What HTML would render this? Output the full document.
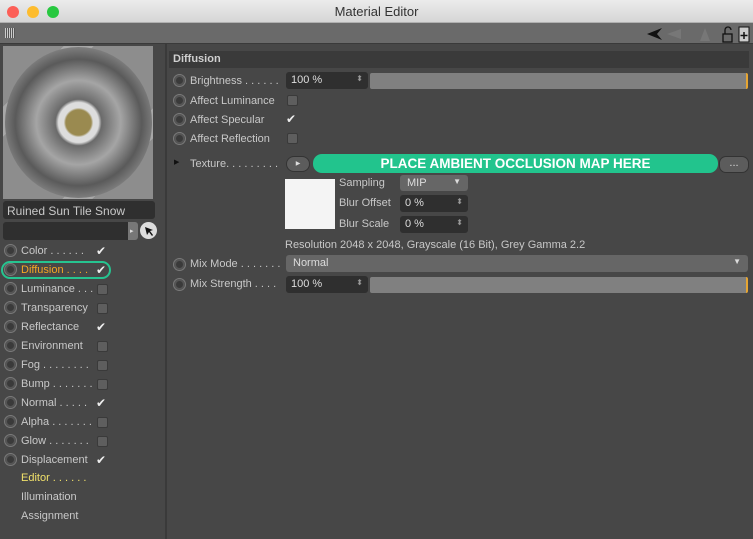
<!DOCTYPE html>
<html><head><style>
*{margin:0;padding:0;box-sizing:border-box}
body{width:753px;height:539px;background:#474747;font-family:"Liberation Sans",sans-serif;font-size:11px;color:#c8c8c8;position:relative;overflow:hidden}
.a{position:absolute}
.rad{position:absolute;width:13px;height:13px;border-radius:50%;background:#3a3a3a;border:1px solid #7a7a7a;box-shadow:inset 0 0 0 2px #555}
.cb{position:absolute;width:11px;height:11px;border-radius:2px;background:#5e5e5e;border:1px solid #3a3a3a}
.ck{position:absolute;font-size:12px;color:#eee;line-height:12px}
.fld{position:absolute;height:17px;background:#2f2f2f;border-radius:3px;color:#ddd;padding:2px 5px;font-size:11px}
.bar{position:absolute;height:16px;background:#808080;border-radius:2px;border-right:2px solid #e6a532}
.lbl{position:absolute;font-size:11px;color:#c8c8c8;white-space:nowrap}
</style></head><body>
<div class="a" style="left:0;top:0;width:753px;height:23px;background:linear-gradient(#ececec,#d6d6d6);border-bottom:1px solid #b0b0b0"></div>
<div class="a" style="left:7px;top:6px;width:12px;height:12px;border-radius:50%;background:#fc5f57"></div>
<div class="a" style="left:27px;top:6px;width:12px;height:12px;border-radius:50%;background:#fdbc2e"></div>
<div class="a" style="left:47px;top:6px;width:12px;height:12px;border-radius:50%;background:#28c840"></div>
<div class="a" style="left:0;top:4px;width:753px;text-align:center;font-size:13px;color:#333">Material Editor</div>
<div class="a" style="left:0;top:23px;width:753px;height:21px;background:#6a6a6a;border-bottom:1px solid #3a3a3a"></div>
<div class="a" style="left:5px;top:28px;width:10px;height:10px;background:repeating-linear-gradient(90deg,#ccc 0 1px,#555 1px 2px)"></div>
<svg class="a" style="left:645px;top:26px" width="108" height="18"><path d="M2 8 L17 2 L12 8 L17 14Z" fill="#111"/><path d="M22 8 L36 3 L36 13Z" fill="#777"/><path d="M55 15 L60 2 L65 15Z" fill="#777"/><rect x="78" y="8" width="9" height="8" fill="none" stroke="#111" stroke-width="1.3"/><path d="M80 8 V4 a3 3 0 0 1 6 0" fill="none" stroke="#111" stroke-width="1.3"/><rect x="94" y="1" width="10" height="15" fill="#ccc" stroke="#111"/><path d="M99 6 V13 M95.5 9.5 H102.5" stroke="#111" stroke-width="1.5"/></svg>
<div class="a" style="left:165px;top:44px;width:2px;height:495px;background:#3a3a3a"></div>
<div class="a" style="left:3px;top:46px;width:150px;height:153px;background:linear-gradient(135deg,#8d8d8d 0 20%,#a8a8a8 20% 30%,#8d8d8d 30% 70%,#a8a8a8 70% 80%,#8d8d8d 80%)"></div>
<div class="a" style="left:5px;top:47px;width:147px;height:151px;border-radius:50%;background:radial-gradient(circle,#9a8a50 0 12%,#ddd 14% 19%,#6a6a6a 22%,#a5a5a5 40%,#5a5a5a 60%,#888 75%,#444 100%)"></div>
<div class="a" style="left:3px;top:201px;width:152px;height:18px;background:#2f2f2f;border-radius:3px;padding:3px 4px;font-size:12px;color:#c8c8c8">Ruined Sun Tile Snow</div>
<div class="a" style="left:3px;top:222px;width:125px;height:18px;background:#2f2f2f;border-radius:3px 0 0 3px"></div>
<div class="a" style="left:128px;top:222px;width:10px;height:18px;background:#777;border-radius:0 3px 3px 0;color:#ddd;font-size:7px;padding:5px 2px">▸</div>
<div class="a" style="left:140px;top:222px;width:17px;height:17px;border-radius:50%;background:#ddd"></div>
<svg class="a" style="left:143px;top:225px" width="12" height="12"><path d="M2 2 L10 5 L7 6 L10 10 L9 11 L6 7 L4 10Z" fill="#111"/></svg>
<div class="a" style="left:1px;top:261px;width:110px;height:18px;border:2px solid #26c490;border-radius:9px"></div>
<div id="list"></div>
<div class="a" style="left:169px;top:51px;width:580px;height:17px;background:#3a3a3a"></div>
<div class="a" style="left:173px;top:53px;font-weight:bold;color:#d0d0d0">Diffusion</div>
<div class="rad" style="left:173px;top:74px"></div><div class="lbl" style="left:190px;top:75px">Brightness . . . . . .</div>
<div class="fld" style="left:286px;top:72px;width:82px">100 %<span style="float:right;font-size:8px;color:#999">⬍</span></div>
<div class="bar" style="left:370px;top:73px;width:378px"></div>
<div class="rad" style="left:173px;top:94px"></div><div class="lbl" style="left:190px;top:95px">Affect Luminance</div><div class="cb" style="left:287px;top:95px"></div>
<div class="rad" style="left:173px;top:113px"></div><div class="lbl" style="left:190px;top:114px">Affect Specular</div><div class="ck" style="left:286px;top:113px">✔</div>
<div class="rad" style="left:173px;top:132px"></div><div class="lbl" style="left:190px;top:133px">Affect Reflection</div><div class="cb" style="left:287px;top:133px"></div>
<div class="lbl" style="left:174px;top:158px;font-size:7px;color:#111">▶</div>
<div class="lbl" style="left:190px;top:158px">Texture. . . . . . . . .</div>
<div class="a" style="left:286px;top:156px;width:24px;height:16px;border-radius:8px;background:#5c5c5c;border:1px solid #333;color:#ddd;font-size:6px;text-align:center;line-height:14px">▶</div>
<div class="a" style="left:313px;top:154px;width:405px;height:19px;border-radius:9px;background:#22c48d;color:#fff;font-weight:bold;font-size:13.5px;text-align:center;line-height:19px">PLACE AMBIENT OCCLUSION MAP HERE</div>
<div class="a" style="left:719px;top:156px;width:30px;height:17px;border-radius:7px;background:#5c5c5c;border:1px solid #333;color:#ddd;text-align:center;line-height:13px">...</div>
<div class="a" style="left:285px;top:179px;width:50px;height:50px;background:#f4f4f4"></div>
<div class="lbl" style="left:339px;top:177px">Sampling</div>
<div class="a" style="left:400px;top:175px;width:68px;height:16px;border-radius:3px;background:#666;color:#ddd;padding:2px 7px">MIP<span style="float:right;font-size:8px">▼</span></div>
<div class="lbl" style="left:339px;top:197px">Blur Offset</div><div class="fld" style="left:400px;top:195px;width:68px">0 %<span style="float:right;font-size:8px;color:#999">⬍</span></div>
<div class="lbl" style="left:339px;top:218px">Blur Scale</div><div class="fld" style="left:400px;top:216px;width:68px">0 %<span style="float:right;font-size:8px;color:#999">⬍</span></div>
<div class="lbl" style="left:285px;top:239px">Resolution 2048 x 2048, Grayscale (16 Bit), Grey Gamma 2.2</div>
<div class="rad" style="left:173px;top:258px"></div><div class="lbl" style="left:190px;top:258px">Mix Mode . . . . . . .</div>
<div class="a" style="left:286px;top:255px;width:462px;height:17px;border-radius:3px;background:#666;color:#ddd;padding:2px 7px">Normal<span style="float:right;font-size:8px">▼</span></div>
<div class="rad" style="left:173px;top:278px"></div><div class="lbl" style="left:190px;top:278px">Mix Strength . . . .</div>
<div class="fld" style="left:286px;top:276px;width:82px">100 %<span style="float:right;font-size:8px;color:#999">⬍</span></div>
<div class="bar" style="left:370px;top:277px;width:378px"></div>
<script>
var it=[["Color . . . . . .",1],["Diffusion . . . .",1],["Luminance . . .",0],["Transparency",0],["Reflectance",1],["Environment",0],["Fog . . . . . . . .",0],["Bump . . . . . . .",0],["Normal . . . . .",1],["Alpha . . . . . . .",0],["Glow . . . . . . .",0],["Displacement",1]];
var h="";it.forEach(function(t,i){var y=251+i*19;h+='<div class="rad" style="left:4px;top:'+(y-7)+'px"></div><div class="lbl" style="left:21px;top:'+(y-6)+'px;'+(i==1?'color:#f5a623':'')+'">'+t[0]+'</div>'+(t[1]?'<div class="ck" style="left:96px;top:'+(y-6)+'px">✔</div>':'<div class="cb" style="left:97px;top:'+(y-5)+'px"></div>');});
h+='<div class="lbl" style="left:21px;top:472px;color:#f0e06a">Editor . . . . . .</div><div class="lbl" style="left:21px;top:491px">Illumination</div><div class="lbl" style="left:21px;top:510px">Assignment</div>';
document.getElementById("list").innerHTML=h;
</script>
</body></html>
